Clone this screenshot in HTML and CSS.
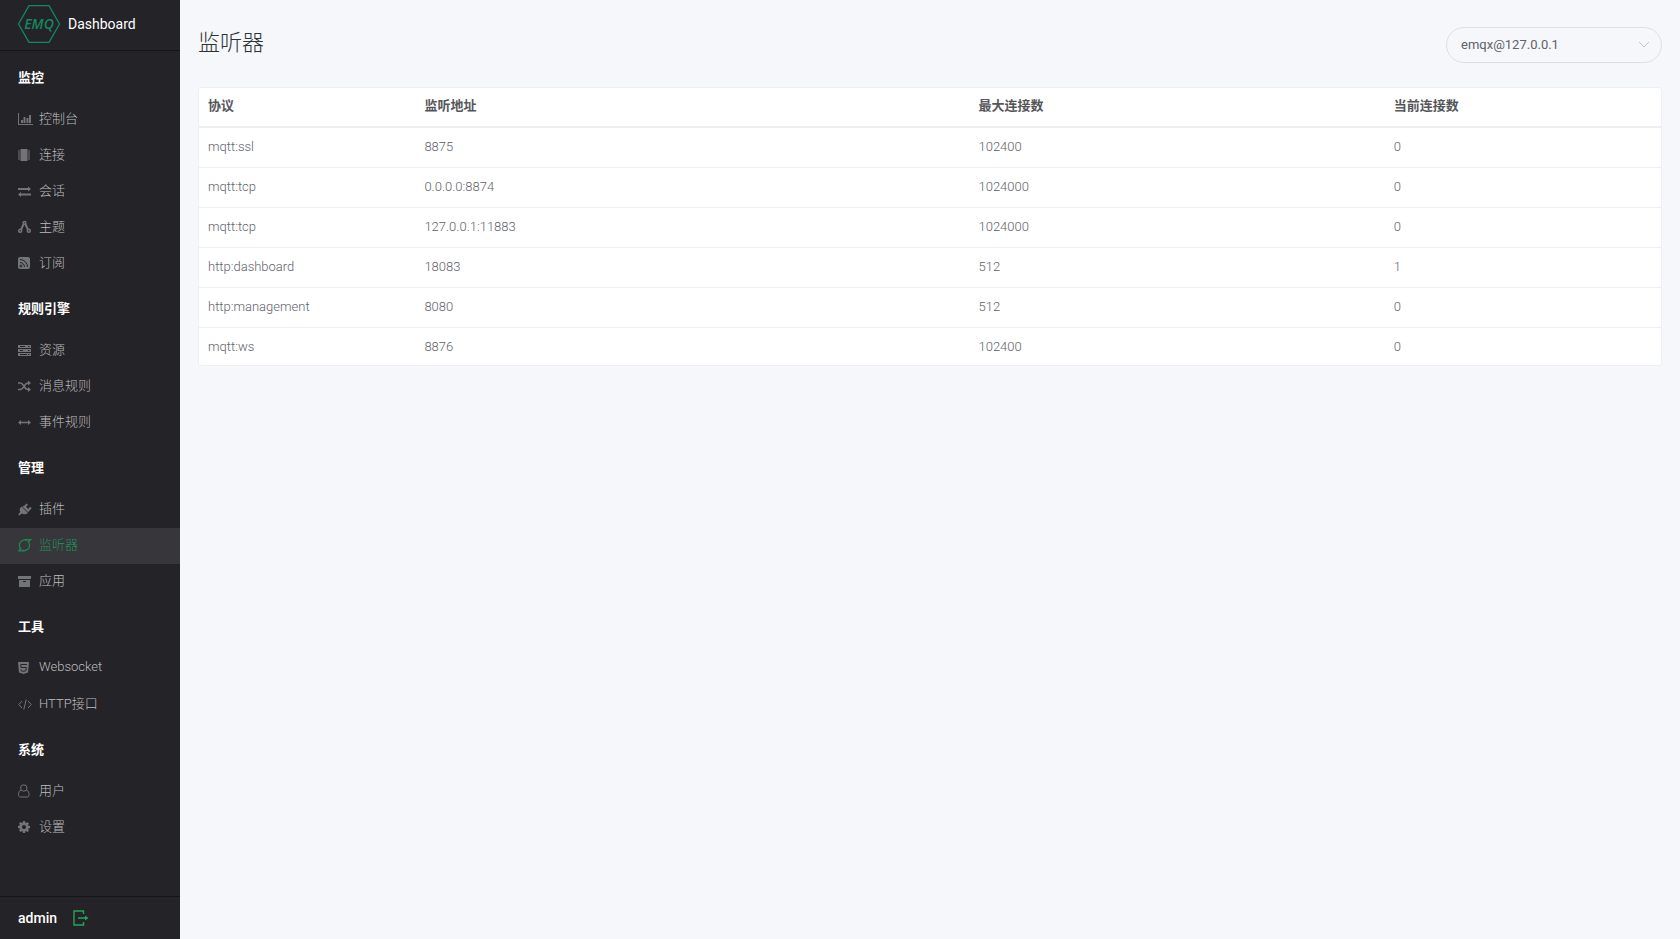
FILE: index.html
```
<!DOCTYPE html>
<html lang="zh-CN">
<head>
  <meta charset="utf-8">
  <title>Dashboard</title>
  <link rel="stylesheet" href="styles.css">
</head>
<body>
  <aside class="sidebar">
    <div class="logo">
      <svg class="logo-mark" viewBox="0 0 44 40" aria-hidden="true">
        <path d="M12 1.700h20l10.500 18.300L32 38.300H12L1.500 20z"/>
        <text x="22" y="25" text-anchor="middle">EMQ</text>
      </svg>
      <span class="logo-text">Dashboard</span>
    </div>

    <nav class="menu">
      <h2 class="menu-title">监控</h2>
      <ul class="menu-list">
        <li><a class="menu-item" href="#">
          <svg class="icon icon-wide" viewBox="0 0 15 14"><path d="M0 1h1v11h14v1H0zM3 8h2v3H3zM5.500 5h2v6h-2zM8.500 6h2v5h-2zM11 3h2v8h-2z"/></svg>控制台</a></li>
        <li><a class="menu-item" href="#">
          <svg class="icon" viewBox="0 0 14 14"><path d="M2.500 1h7v12h-7zM0 2.500h2v1H0zM0 4.500h2v1H0zM0 6.500h2v1H0zM0 8.500h2v1H0zM0 10.500h2v1H0zM10 2.500h2v1h-2zM10 4.500h2v1h-2zM10 6.500h2v1h-2zM10 8.500h2v1h-2zM10 10.500h2v1h-2z"/></svg>连接</a></li>
        <li><a class="menu-item" href="#">
          <svg class="icon" viewBox="0 0 14 14"><path d="M0 4h10V2.500L13 5l-3 2.500V6H0zM13 9.500H3V8L0 10.500 3 13v-1.500h10z"/></svg>会话</a></li>
        <li><a class="menu-item" href="#">
          <svg class="icon icon-line" viewBox="0 0 14 14"><g stroke-width="1.500"><circle cx="6.500" cy="2.800" r="1.400"/><circle cx="2.200" cy="10.800" r="1.500"/><circle cx="10.800" cy="10.800" r="1.500"/></g><path stroke-width="2" d="M5.600 4 3.200 9.400M7.400 4l2.400 5.400"/></svg>主题</a></li>
        <li><a class="menu-item" href="#">
          <svg class="icon" viewBox="0 0 14 14"><rect x="0" y="1" width="12" height="12" rx="2"/><g class="cut"><circle cx="3" cy="10" r="1"/><path d="M2 6.500A4.500 4.500 0 0 1 6.500 11M2 3.500A7.500 7.500 0 0 1 9.500 11"/></g></svg>订阅</a></li>
      </ul>

      <h2 class="menu-title">规则引擎</h2>
      <ul class="menu-list">
        <li><a class="menu-item" href="#">
          <svg class="icon" viewBox="0 0 14 14"><path d="M0 2h13v3H0zM0 6h13v3H0zM0 10h13v3H0z"/><path class="cut" d="M2 3.500h5M10 3.500h1.500M2 7.500h3M10 7.500h1.500M2 11.500h7M10 11.500h1.500"/></svg>资源</a></li>
        <li><a class="menu-item" href="#">
          <svg class="icon icon-line" viewBox="0 0 14 14"><path stroke-width="1.700" d="M0 4h2.500C6 4 6 10.500 10 10.500h1M0 10.500h2.500C6 10.500 6 4 10 4h1"/><path class="solid" d="M10 1.500 13 4l-3 2.500zM10 8l3 2.500L10 13z"/></svg>消息规则</a></li>
        <li><a class="menu-item" href="#">
          <svg class="icon" viewBox="0 0 14 14"><path d="M0 7.500 3 5v1.800h7V5l3 2.500L10 10V8.200H3V10z"/></svg>事件规则</a></li>
      </ul>

      <h2 class="menu-title">管理</h2>
      <ul class="menu-list">
        <li><a class="menu-item" href="#">
          <svg class="icon" viewBox="0 0 14 14"><path d="M3.500 4.500 10 11c-2 1.600-4.500 1.800-6.300.6L1.500 13.500.2 12.600 2.200 10C1.200 8 1.700 6 3.500 4.500z"/><path class="stroke" d="m6 6 3.200-4M9.500 9 13 5.500"/><path d="m4.500 4.500 2-1.200 5 5-1.300 2z"/></svg>插件</a></li>
        <li><a class="menu-item active" href="#">
          <svg class="icon icon-line" viewBox="0 0 14 14"><path stroke-width="1.300" d="M9.200 2.300C5 .9 1.200 3.700 1.300 7.300c0 1.600.8 2.900 1.800 3.900M3.600 12.200c4.300 1.500 8.100-1.300 8-4.900 0-1.600-.7-2.900-1.700-3.900"/><path stroke-width="1.300" d="M6.500 1.700h6L9.900 4.200M6.500 12.900h-6l2.600-2.500"/></svg>监听器</a></li>
        <li><a class="menu-item" href="#">
          <svg class="icon" viewBox="0 0 14 14"><path d="M0 2h13v3H0zM1 6h11v7H1z"/><path class="cut" d="M5 7.500h3"/></svg>应用</a></li>
      </ul>

      <h2 class="menu-title">工具</h2>
      <ul class="menu-list">
        <li><a class="menu-item" href="#">
          <svg class="icon" viewBox="0 0 14 14"><path d="M0 1h11l-1 10.500L5.500 13 1 11.500z"/><path class="cut" d="M9 3.500H2.800L3 6.500h5.300L8 9.600l-2.500.8L3 9.600V8.500"/></svg>Websocket</a></li>
        <li><a class="menu-item" href="#">
          <svg class="icon icon-line" viewBox="0 0 14 14"><path d="M4 4 .8 7.500 4 11M10 4l3.200 3.500L10 11M8.200 2.500l-2.400 10"/></svg>HTTP接口</a></li>
      </ul>

      <h2 class="menu-title">系统</h2>
      <ul class="menu-list">
        <li><a class="menu-item" href="#">
          <svg class="icon icon-line" viewBox="0 0 14 14"><circle cx="5.800" cy="4" r="3.200"/><path d="M3 6.200C1.200 6.600.5 8.500.5 10.800c0 1.200.8 2.200 2 2.200h6.600c1.200 0 2-1 2-2.200 0-2.300-.7-4.200-2.500-4.600"/></svg>用户</a></li>
        <li><a class="menu-item" href="#">
          <svg class="icon" viewBox="128 0 1792 1792"><path d="M1152 896q0-106-75-181t-181-75-181 75-75 181 75 181 181 75 181-75 75-181zm512-109v222q0 12-8 23t-20 13l-185 28q-19 54-39 91 35 50 107 138 10 12 10 25t-9 23q-27 37-99 108t-94 71q-12 0-26-9l-138-108q-44 23-91 38-16 136-29 186-7 28-36 28h-222q-14 0-24.500-8.500t-11.500-21.500l-28-184q-49-16-90-37l-141 107q-10 9-25 9-14 0-25-11-126-114-165-168-7-10-7-23 0-12 8-23 15-21 51-66.500t54-70.500q-27-50-41-99l-183-27q-13-2-21-12.500t-8-23.500v-222q0-12 8-23t19-13l186-28q14-46 39-92-40-57-107-138-10-12-10-24 0-10 9-23 26-36 98.500-107.500t94.500-71.500q13 0 26 10l138 107q44-23 91-38 16-136 29-186 7-28 36-28h222q14 0 24.500 8.500t11.500 21.500l28 184q49 16 90 37l142-107q9-9 24-9 13 0 25 10 129 119 165 170 7 8 7 22 0 12-8 23-15 21-51 66.500t-54 70.500q26 50 41 98l183 28q13 2 21 12.500t8 23.500z"/></svg>设置</a></li>
      </ul>
    </nav>

    <div class="account">
      <span class="account-name">admin</span>
      <button class="logout" type="button" aria-label="退出">
        <svg viewBox="0 0 16 16"><path d="M10.500 4V1H1v14h9.500v-3M5 8h9"/><path class="solid" d="M12 5.500 15.500 8 12 10.500z"/></svg>
      </button>
    </div>
  </aside>

  <main class="content">
    <header class="page-header">
      <h1 class="page-title">监听器</h1>
      <div class="node-select">
        <select aria-label="节点">
          <option>emqx@127.0.0.1</option>
        </select>
        <svg class="arrow" viewBox="0 0 12 8" aria-hidden="true"><path d="m1 1 5 5 5-5"/></svg>
      </div>
    </header>

    <div class="table-box">
      <table class="table">
        <colgroup>
          <col class="col-protocol">
          <col class="col-address">
          <col class="col-max">
          <col class="col-current">
        </colgroup>
        <thead>
          <tr><th>协议</th><th>监听地址</th><th>最大连接数</th><th>当前连接数</th></tr>
        </thead>
        <tbody>
          <tr><td>mqtt:ssl</td><td>8875</td><td>102400</td><td>0</td></tr>
          <tr><td>mqtt:tcp</td><td>0.0.0.0:8874</td><td>1024000</td><td>0</td></tr>
          <tr><td>mqtt:tcp</td><td>127.0.0.1:11883</td><td>1024000</td><td>0</td></tr>
          <tr><td>http:dashboard</td><td>18083</td><td>512</td><td>1</td></tr>
          <tr><td>http:management</td><td>8080</td><td>512</td><td>0</td></tr>
          <tr><td>mqtt:ws</td><td>8876</td><td>102400</td><td>0</td></tr>
        </tbody>
      </table>
    </div>
  </main>
</body>
</html>
```
FILE: styles.css
```
* {
  margin: 0;
  padding: 0;
  box-sizing: border-box;
}

body {
  display: flex;
  min-height: 100vh;
  background: #f5f7fb;
  color: #5f626b;
  font-family: Roboto, "Noto Sans CJK SC", sans-serif;
  font-size: 13px;
  font-weight: 300;
}

/* sidebar */
.sidebar {
  display: flex;
  flex-direction: column;
  flex: none;
  width: 180px;
  background: #242327;
}

.logo {
  display: flex;
  align-items: center;
  gap: 7px;
  height: 51px;
  padding: 0 17px 2px;
  border-bottom: 1px solid #151417;
}

.logo-mark {
  width: 44px;
  height: 40px;
}

.logo-mark path {
  fill: none;
  stroke: #13895f;
  stroke-width: 1.3;
}

.logo-mark text {
  fill: #13895f;
  font-family: "Open Sans", sans-serif;
  font-size: 14px;
  font-style: italic;
  font-weight: 600;
}

.logo-text {
  color: #fff;
  font-size: 14px;
  font-weight: 400;
}

.menu {
  flex: 1;
}

.menu-title {
  height: 51px;
  padding-left: 18px;
  color: #fff;
  font-size: 13px;
  font-weight: 700;
  line-height: 54px;
}

.menu-list {
  list-style: none;
}

.menu-item {
  display: flex;
  align-items: center;
  height: 36px;
  padding: 0 0 5px 18px;
  color: #bcbcbe;
  text-decoration: none;
}

.menu-item.active {
  background: #37363a;
  color: #22915a;
}

.icon {
  width: 14px;
  height: 14px;
  margin: 3px 7px 0 0;
  fill: #737479;
}

.icon-wide {
  width: 15px;
  margin-right: 6px;
}

.icon-line {
  fill: none;
  stroke: #737479;
}

.icon .solid {
  fill: #737479;
  stroke: none;
}

.icon .stroke {
  stroke: #737479;
  stroke-width: 2;
}

.icon .cut {
  fill: none;
  stroke: #242327;
}

.active .icon {
  stroke: #22854f;
}

.account {
  display: flex;
  align-items: center;
  gap: 16px;
  height: 43px;
  padding-left: 18px;
  border-top: 1px solid #151417;
}

.account-name {
  color: #fff;
  font-size: 14px;
  font-weight: 500;
}

.logout {
  width: 16px;
  height: 16px;
  border: 0;
  background: none;
  cursor: pointer;
}

.logout svg {
  display: block;
  fill: none;
  stroke: #22a659;
  stroke-width: 1.4;
}

.logout .solid {
  fill: #22a659;
  stroke: none;
}

/* content */
.content {
  flex: 1;
  padding: 27px 18px;
}

.page-header {
  display: flex;
  justify-content: space-between;
  align-items: flex-start;
  margin-bottom: 24px;
}

.page-title {
  color: #303136;
  font-size: 22px;
  font-weight: 300;
  line-height: 32px;
}

.node-select {
  position: relative;
  width: 216px;
}

.node-select select {
  width: 100%;
  height: 36px;
  padding: 0 30px 2px 14px;
  border: 1px solid #dcdfe6;
  border-radius: 18px;
  background: transparent;
  color: #606266;
  font-family: inherit;
  font-size: 13px;
  font-weight: 400;
  appearance: none;
}

.arrow {
  position: absolute;
  top: 14px;
  right: 12px;
  width: 12px;
  height: 8px;
  fill: none;
  stroke: #c0c4cc;
  pointer-events: none;
}

.table-box {
  overflow: hidden;
  border: 1px solid #eff0f3;
  border-radius: 3px;
  background: #fff;
}

.table {
  width: 100%;
  border-spacing: 0;
  table-layout: fixed;
}

.col-protocol {
  width: 14.8%;
}

.col-address {
  width: 37.9%;
}

.col-max {
  width: 28.4%;
}

.col-current {
  width: 18.9%;
}

.table th,
.table td {
  padding: 9px 9px 11px;
  border-bottom: 1px solid #eeeff1;
  line-height: 19px;
  text-align: left;
}

.table th {
  padding: 8px 9px 11px;
  border-bottom-width: 2px;
  color: #55565a;
  font-weight: 700;
}

.table tbody tr:last-child td {
  padding-bottom: 9px;
  border-bottom: 0;
}
```
